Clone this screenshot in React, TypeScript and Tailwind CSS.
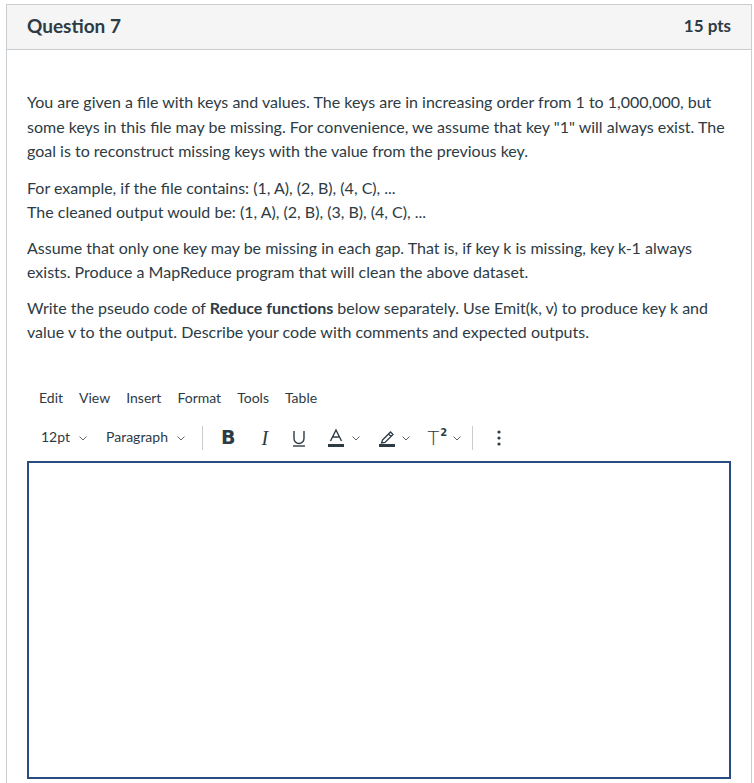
import React from 'react';

const Chevron: React.FC<{ className?: string }> = ({ className = '' }) => (
  <svg width="10" height="10" viewBox="0 0 10 10" className={className} fill="none" stroke="#5b6770" strokeWidth="1">
    <path d="M1.5 3.5 L5 7 L8.5 3.5" />
  </svg>
);

const Sep: React.FC<{ className?: string }> = ({ className = '' }) => (
  <div className={`w-px h-[24px] bg-[#c7cdd1] ${className}`} />
);

const menuItems = ['Edit', 'View', 'Insert', 'Format', 'Tools', 'Table'];

const App: React.FC = () => {
  return (
    <div className="w-[754px] h-[783px] overflow-hidden bg-white pt-[4px] pl-[6px] pr-[2px] text-[#2d3b45]" style={{ fontFamily: 'Lato, "Noto Sans", sans-serif' }}>
      <div className="border border-b-0 border-[#c7cdd1] h-[800px]">
        <div className="h-[45px] bg-[#f5f5f5] border-b border-[#c7cdd1] flex items-center justify-between px-[20px] pb-[2px]">
          <h2 className="text-[19px] font-bold">Question 7</h2>
          <span className="text-[17px] font-bold">15 pts</span>
        </div>
        <div className="px-[20px] pt-[40px] text-[16px] leading-[24.5px]">
          <p>
            You are given a file with keys and values. The keys are in increasing order from 1 to 1,000,000, but some keys in this file may be missing. For convenience, we assume that key "1" will always exist. The goal is to reconstruct missing keys with the value from the previous key.
          </p>
          <p className="mt-[12px]">
            For example, if the file contains: (1, A), (2, B), (4, C), ...
            <br />
            The cleaned output would be: (1, A), (2, B), (3, B), (4, C), ...
          </p>
          <p className="mt-[11px]">
            Assume that only one key may be missing in each gap. That is, if key k is missing, key k-1 always exists. Produce a MapReduce program that will clean the above dataset.
          </p>
          <p className="mt-[11px]">
            Write the pseudo code of <strong className="font-bold">Reduce functions</strong> below separately. Use Emit(k, v) to produce key k and value v to the output. Describe your code with comments and expected outputs.
          </p>

          <div className="mt-[42px]">
            <div className="flex items-center gap-[16px] pl-[12px] h-[24px] text-[14px]">
              {menuItems.map(m => (
                <span key={m}>{m}</span>
              ))}
            </div>
            <div className="flex items-center pl-[14px] h-[40px] mt-[7px] text-[14px]">
              <span>12pt</span>
              <Chevron className="ml-[8px]" />
              <span className="ml-[18px]">Paragraph</span>
              <Chevron className="ml-[8px]" />
              <Sep className="ml-[16px]" />
              <span className="ml-[18px] text-[19px] font-bold leading-none" style={{ fontFamily: '"DejaVu Sans", sans-serif' }}>B</span>
              <span className="ml-[26px] text-[20px] italic leading-none" style={{ fontFamily: '"Liberation Serif", serif' }}>I</span>
              <svg width="14" height="20" viewBox="0 0 14 20" className="ml-[24px]" fill="none" stroke="#2d3b45" strokeWidth="1.4">
                <path d="M2 3 V10.5 A5 5 0 0 0 12 10.5 V3" />
                <path d="M1 18 H13" />
              </svg>
              <svg width="16" height="20" viewBox="0 0 16 20" className="ml-[22px]" fill="none" stroke="#2d3b45" strokeWidth="1.4">
                <path d="M2.5 13 L8 2 L13.5 13 M4.8 9 H11.2" />
                <rect x="0" y="16" width="16" height="3" fill="#2d3b45" stroke="none" />
              </svg>
              <Chevron className="ml-[7px]" />
              <svg width="16" height="20" viewBox="0 0 16 20" className="ml-[18px]" fill="none" stroke="#2d3b45" strokeWidth="1.3">
                <path d="M3.5 12 L11.5 4 L14 6.5 L6 14.5 L2.5 15 Z M9.5 6 L12 8.5" />
                <rect x="0" y="16" width="16" height="3" fill="#2d3b45" stroke="none" />
              </svg>
              <Chevron className="ml-[6px]" />
              <span className="ml-[16px] flex items-start text-[20px] font-light leading-none" style={{ fontFamily: '"DejaVu Sans", sans-serif' }}>
                T<span className="text-[10px] font-bold ml-[1px]">2</span>
              </span>
              <Chevron className="ml-[5px]" />
              <Sep className="ml-[10px]" />
              <svg width="4" height="16" viewBox="0 0 4 16" className="ml-[24px]" fill="#2d3b45">
                <circle cx="2" cy="2" r="1.6" />
                <circle cx="2" cy="8" r="1.6" />
                <circle cx="2" cy="14" r="1.6" />
              </svg>
            </div>
            <div className="mt-[3px] h-[318px] border-2 border-[#284c7f]" />
          </div>
        </div>
      </div>
    </div>
  );
};

export default App;
